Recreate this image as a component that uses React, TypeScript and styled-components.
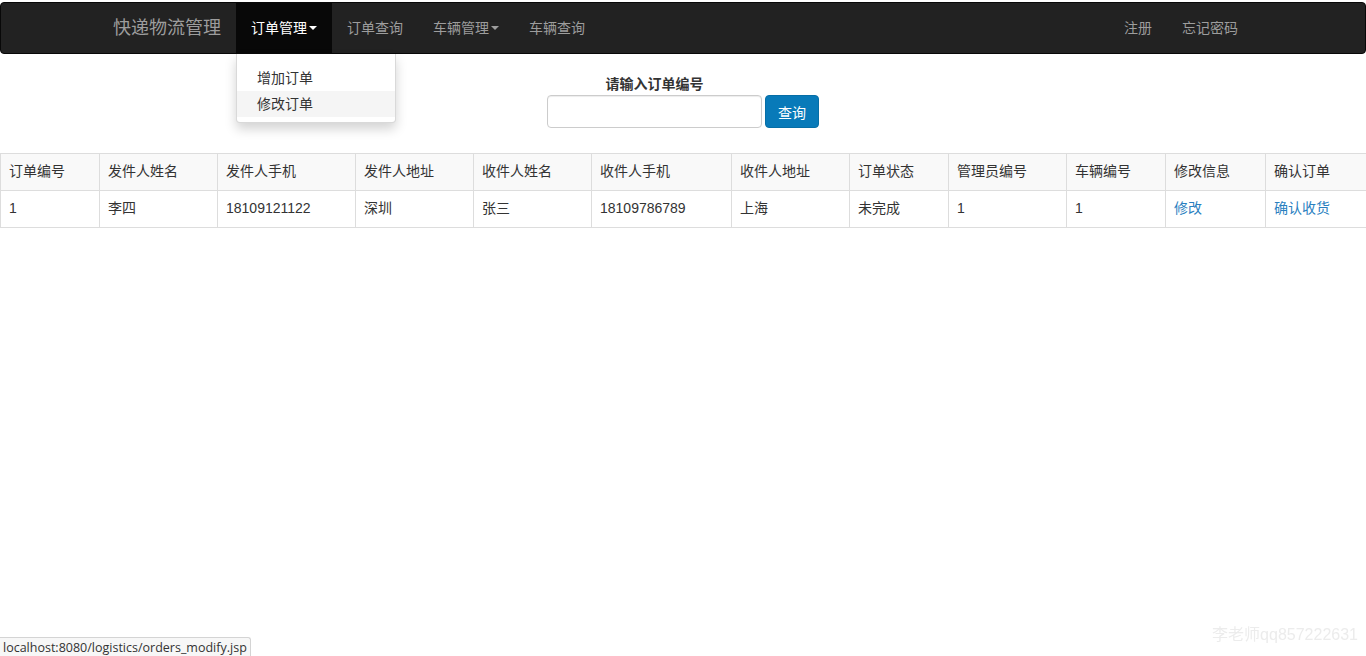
import styled, { createGlobalStyle } from 'styled-components';

const GlobalStyle = createGlobalStyle`
  html, body {
    margin: 0;
    padding: 0;
    background: #fff;
    font-family: "Liberation Sans", "Noto Sans CJK SC", sans-serif;
    font-size: 14px;
    line-height: 1.42857;
    color: #333;
  }
  * { box-sizing: border-box; }
`;

const Page = styled.div`
  min-height: 656px;
  padding-top: 2px;
`;

const Navbar = styled.nav`
  height: 52px;
  background: #222;
  border: 1px solid #080808;
  border-radius: 4px;
`;

const NavContainer = styled.div`
  width: 1170px;
  margin: 0 auto;
  padding: 0 15px;
  display: flex;
  align-items: stretch;
  height: 50px;
`;

const Brand = styled.a`
  margin-left: -15px;
  padding: 15px;
  font-size: 18px;
  line-height: 20px;
  color: #9d9d9d;
  text-decoration: none;
`;

const NavList = styled.ul<{ $right?: boolean }>`
  display: flex;
  list-style: none;
  margin: 0 0 0 ${({ $right }) => ($right ? 'auto' : '0')};
  padding: 0;
`;

const NavItem = styled.li`
  position: relative;
`;

const NavLink = styled.a<{ $active?: boolean }>`
  display: flex;
  align-items: center;
  padding: 15px;
  line-height: 20px;
  color: ${({ $active }) => ($active ? '#fff' : '#9d9d9d')};
  background: ${({ $active }) => ($active ? '#080808' : 'transparent')};
  text-decoration: none;
  cursor: pointer;
`;

const Caret = styled.span`
  display: inline-block;
  width: 0;
  height: 0;
  margin-left: 2px;
  border-top: 4px solid;
  border-left: 4px solid transparent;
  border-right: 4px solid transparent;
`;

const Dropdown = styled.ul`
  position: absolute;
  top: 100%;
  left: 0;
  z-index: 10;
  min-width: 160px;
  margin: 1px 0 0;
  padding: 11px 0 5px;
  list-style: none;
  background: #fff;
  border: 1px solid rgba(0, 0, 0, 0.15);
  border-top: 0;
  border-radius: 0 0 4px 4px;
  box-shadow: 0 6px 12px rgba(0, 0, 0, 0.175);
`;

const DropItem = styled.li<{ $hover?: boolean }>`
  padding: 3px 20px;
  line-height: 20px;
  color: #333;
  white-space: nowrap;
  background: ${({ $hover }) => ($hover ? '#f5f5f5' : 'transparent')};
`;

const SearchForm = styled.form`
  display: grid;
  grid-template-columns: 1fr 215px 1fr;
  padding-right: 57px;
  margin-top: 20px;
`;

const Field = styled.div`
  grid-column: 2;
  display: flex;
  flex-direction: column;
  align-items: center;
`;

const Label = styled.label`
  font-weight: bold;
  line-height: 20px;
  margin-bottom: 1px;
`;

const Input = styled.input`
  width: 215px;
  height: 33px;
  border: 1px solid #ccc;
  border-radius: 4px;
  box-shadow: inset 0 1px 1px rgba(0, 0, 0, 0.075);
`;

const Button = styled.button`
  grid-column: 3;
  align-self: end;
  justify-self: start;
  margin-left: 3px;
  width: 54px;
  height: 33px;
  border: 1px solid #066ea6;
  border-radius: 4px;
  background: #087ab9;
  color: #fff;
  font-family: inherit;
  font-size: 14px;
`;

const Table = styled.table`
  margin-top: 25px;
  width: 100%;
  border-collapse: collapse;
  table-layout: fixed;
  border: 1px solid #ddd;
`;

const Th = styled.th`
  padding: 8px;
  height: 37px;
  text-align: left;
  font-weight: normal;
  border: 1px solid #ddd;
  background: #f9f9f9;
  white-space: nowrap;
`;

const Td = styled.td`
  padding: 8px;
  height: 37px;
  border: 1px solid #ddd;
  white-space: nowrap;
`;

const Link = styled.a`
  color: #2a7fbf;
  text-decoration: none;
`;

const StatusBar = styled.div`
  position: fixed;
  left: 0;
  bottom: 0;
  padding: 1px 3px 0 3px;
  height: 19px;
  font-family: "Open Sans", "Noto Sans", sans-serif;
  font-size: 12.5px;
  line-height: 18px;
  color: #333;
  background: #f7f7f7;
  border: 1px solid #d4d4d4;
  border-left: 0;
  border-bottom: 0;
  border-top-right-radius: 3px;
`;

const Watermark = styled.div`
  position: fixed;
  right: 8px;
  bottom: 9px;
  font-size: 16px;
  color: #ececec;
  pointer-events: none;
`;

const widths = [99, 118, 138, 118, 118, 140, 118, 99, 118, 99, 100, 101];
const headers = ['订单编号', '发件人姓名', '发件人手机', '发件人地址', '收件人姓名', '收件人手机', '收件人地址', '订单状态', '管理员编号', '车辆编号', '修改信息', '确认订单'];
const row = ['1', '李四', '18109121122', '深圳', '张三', '18109786789', '上海', '未完成', '1', '1'];

export default function App() {
  return (
    <Page>
      <GlobalStyle />
      <Navbar>
        <NavContainer>
          <Brand>快递物流管理</Brand>
          <NavList>
            <NavItem>
              <NavLink $active>订单管理<Caret /></NavLink>
              <Dropdown>
                <DropItem>增加订单</DropItem>
                <DropItem $hover>修改订单</DropItem>
              </Dropdown>
            </NavItem>
            <NavItem><NavLink>订单查询</NavLink></NavItem>
            <NavItem><NavLink>车辆管理<Caret /></NavLink></NavItem>
            <NavItem><NavLink>车辆查询</NavLink></NavItem>
          </NavList>
          <NavList $right>
            <NavItem><NavLink>注册</NavLink></NavItem>
            <NavItem><NavLink>忘记密码</NavLink></NavItem>
          </NavList>
        </NavContainer>
      </Navbar>

      <SearchForm onSubmit={(e) => e.preventDefault()}>
        <Field>
          <Label>请输入订单编号</Label>
          <Input type="text" />
        </Field>
        <Button type="submit">查询</Button>
      </SearchForm>

      <Table>
        <colgroup>
          {widths.map((w, i) => (
            <col key={i} style={{ width: w }} />
          ))}
        </colgroup>
        <thead>
          <tr>
            {headers.map((h) => (
              <Th key={h}>{h}</Th>
            ))}
          </tr>
        </thead>
        <tbody>
          <tr>
            {row.map((c, i) => (
              <Td key={i}>{c}</Td>
            ))}
            <Td><Link href="#">修改</Link></Td>
            <Td><Link href="#">确认收货</Link></Td>
          </tr>
        </tbody>
      </Table>

      <StatusBar>localhost:8080/logistics/orders_modify.jsp</StatusBar>
      <Watermark>李老师qq857222631</Watermark>
    </Page>
  );
}
